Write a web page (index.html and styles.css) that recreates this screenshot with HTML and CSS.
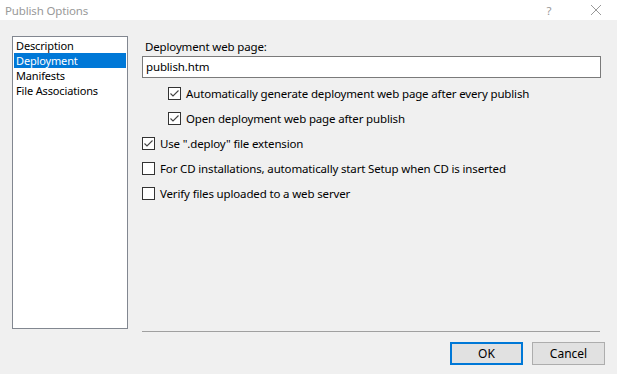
FILE: index.html
```html
<!DOCTYPE html>
<html lang="en">
  <head>
    <meta charset="UTF-8" />
    <title>Publish Options</title>
    <link rel="stylesheet" href="styles.css">
  </head>
  <body>
    <!-- Title bar -->
    <div class="titlebar">
      <span class="title">Publish Options</span>
      <span class="title-btn help">?</span>
      <span class="title-btn close">
        <svg width="12" height="12" viewBox="0 0 12 12"><path d="M1 1 L11 11 M11 1 L1 11" stroke="#999" stroke-width="1" fill="none"/></svg>
      </span>
    </div>

    <div class="dialog">
      <!-- Category list -->
      <div class="listbox">
        <div class="list-item">Description</div>
        <div class="list-item selected">Deployment</div>
        <div class="list-item">Manifests</div>
        <div class="list-item">File Associations</div>
      </div>

      <!-- Deployment page -->
      <div class="panel">
        <div class="options">
          <label class="field-label">Deployment web page:</label>
          <div class="textbox">publish.htm</div>

          <div class="check-row indent">
            <span class="checkbox checked"></span>
            <span>Automatically generate deployment web page after every publish</span>
          </div>
          <div class="check-row indent">
            <span class="checkbox checked"></span>
            <span>Open deployment web page after publish</span>
          </div>
          <div class="check-row">
            <span class="checkbox checked"></span>
            <span>Use ".deploy" file extension</span>
          </div>
          <div class="check-row">
            <span class="checkbox"></span>
            <span>For CD installations, automatically start Setup when CD is inserted</span>
          </div>
          <div class="check-row">
            <span class="checkbox"></span>
            <span>Verify files uploaded to a web server</span>
          </div>
        </div>

        <div class="footer">
          <div class="separator"></div>
          <div class="buttons">
            <button class="btn default">OK</button>
            <button class="btn">Cancel</button>
          </div>
        </div>
      </div>
    </div>
  </body>
</html>
```

FILE: styles.css
```css
body {
  margin: 0;
  width: 617px;
  height: 374px;
  background-color: #f0f0f0;
  font-family: "Noto Sans", "Open Sans", sans-serif;
  font-size: 11.5px;
  letter-spacing: -0.15px;
  color: #000;
  overflow: hidden;
}

/* Title bar */
.titlebar {
  height: 20px;
  background-color: #fff;
  display: flex;
  align-items: center;
}

.titlebar .title {
  margin-left: 5px;
  color: #999;
  flex: 1;
}

.title-btn {
  color: #999;
  display: flex;
  align-items: center;
  justify-content: center;
}

.title-btn.help {
  width: 14px;
  margin-right: 34px;
}

.title-btn.close {
  width: 12px;
  margin-right: 15px;
}

/* Main dialog area */
.dialog {
  display: flex;
  padding: 16px 0 0 12px;
  height: 338px;
}

.listbox {
  width: 114px;
  height: 290px;
  background-color: #fff;
  border: 1px solid #828790;
  padding-top: 1px;
}

.list-item {
  height: 15px;
  line-height: 15px;
  font-size: 11px;
  padding-left: 2px;
  margin: 0 1px;
  white-space: nowrap;
}

.list-item.selected {
  background-color: #0078d7;
  color: #fff;
}

.panel {
  margin-left: 14px;
  width: 463px;
  display: flex;
  flex-direction: column;
}

.options {
  flex: 1;
}

.field-label {
  display: block;
  margin: 1px 0 0 3px;
  height: 19px;
  line-height: 19px;
}

.textbox {
  width: 454px;
  height: 20px;
  line-height: 20px;
  background-color: #fff;
  border: 1px solid #7a7a7a;
  padding-left: 3px;
  margin-bottom: 3px;
}

.check-row {
  display: flex;
  align-items: center;
  height: 25px;
}

.check-row.indent {
  margin-left: 26px;
}

.check-row span:last-child {
  margin-left: 5px;
  white-space: nowrap;
}

.checkbox {
  width: 11px;
  height: 11px;
  border: 1px solid #333;
  background-color: #fff;
  flex: none;
}

.checkbox.checked {
  background-image: url("data:image/svg+xml;utf8,<svg xmlns='http://www.w3.org/2000/svg' width='11' height='11' viewBox='0 0 11 11'><path d='M1.5 5.5 L4 8 L9.5 2.5' stroke='%23444' stroke-width='1.1' fill='none'/></svg>");
}

/* Footer */
.separator {
  width: 458px;
  height: 1px;
  background-color: #a0a0a0;
}

.buttons {
  display: flex;
  justify-content: flex-end;
  gap: 9px;
  margin-top: 10px;
  padding-bottom: 9px;
}

.btn {
  width: 73px;
  height: 23px;
  background-color: #e1e1e1;
  border: 1px solid #adadad;
  font-family: inherit;
  font-size: 12px;
  color: #000;
  padding: 0;
}

.btn.default {
  border: 2px solid #0078d7;
}
```
